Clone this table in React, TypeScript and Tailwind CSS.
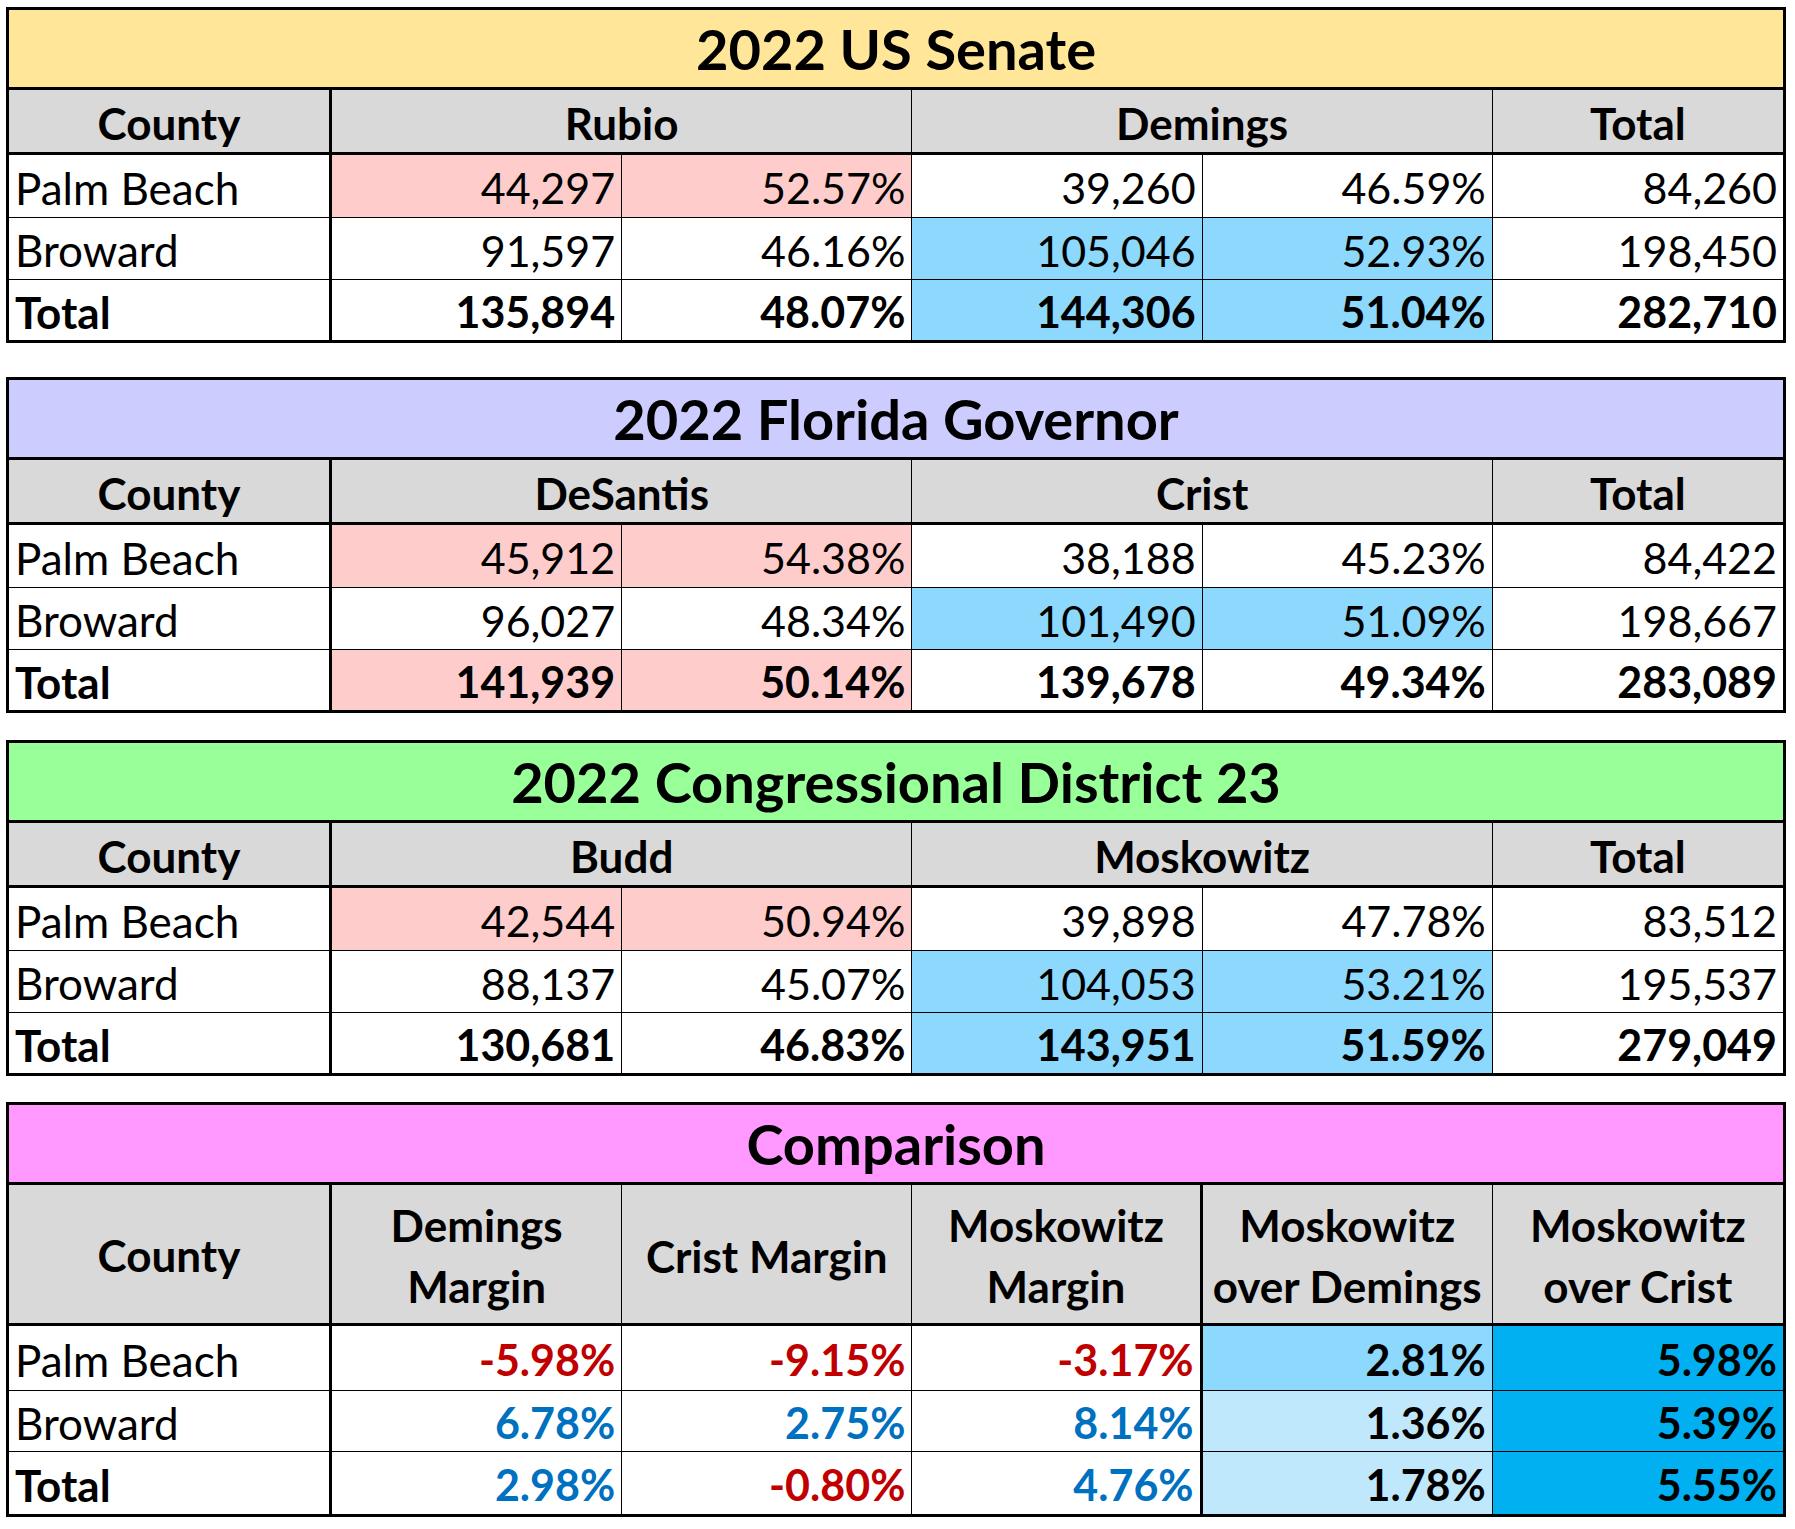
import React from 'react'

type Cell = { v: string; bg?: string; color?: string; bold?: boolean }
type Row = { county: string; total?: boolean; cells: Cell[] }

const PINK = 'bg-[#ffcccc]'
const BLUE = 'bg-[#8dd8fd]'
const LIGHT = 'bg-[#c0e8fc]'
const DEEP = 'bg-[#00b0f0]'
const RED = 'text-[#c00000]'
const BLU = 'text-[#0070c0]'

const rowHeights = ['h-[63px] border-b border-black', 'h-[62px] border-b border-black', 'h-[60px]']
const cmpHeights = ['h-[65px] border-b border-black', 'h-[61px] border-b border-black', 'h-[62px]']

function DataRow({ row, height, thick }: { row: Row; height: string; thick: number[] }) {
  return (
    <div className={`grid grid-cols-[323px_repeat(5,minmax(0,1fr))] ${height}`}>
      <div
        className={`flex items-center pt-[4px] px-[6px] border-r-[3px] border-black text-[44px] ${row.total ? 'font-bold' : ''}`}
      >
        {row.county}
      </div>
      {row.cells.map((c, i) => (
        <div
          key={i}
          className={`flex items-center justify-end pt-[4px] px-[6px] text-[43px] border-black ${
            i === 4 ? '' : thick.includes(i) ? 'border-r-[3px]' : 'border-r'
          } ${c.bg ?? 'bg-white'} ${c.color ?? 'text-black'} ${c.bold || row.total ? 'font-bold' : ''}`}
        >
          {c.v}
        </div>
      ))}
    </div>
  )
}

function Title({ text, bg }: { text: string; bg: string }) {
  return (
    <div className={`h-[80px] flex items-center justify-center border-b-[3px] border-black ${bg}`}>
      <span className="text-[56px] font-bold">{text}</span>
    </div>
  )
}

function RaceTable({
  title,
  titleBg,
  names,
  rows,
  className,
}: {
  title: string
  titleBg: string
  names: [string, string]
  rows: Row[]
  className?: string
}) {
  return (
    <div className={`w-[1780px] border-[3px] border-black bg-white ${className ?? ''}`}>
      <Title text={title} bg={titleBg} />
      <div className="grid grid-cols-[323px_repeat(5,minmax(0,1fr))] h-[65px] border-b-[3px] border-black bg-[#d9d9d9] text-[44px] font-bold">
        <div className="flex items-center justify-center pt-[4px] border-r-[3px] border-black">County</div>
        <div className="col-span-2 flex items-center justify-center pt-[4px] border-r border-black">{names[0]}</div>
        <div className="col-span-2 flex items-center justify-center pt-[4px] border-r border-black">{names[1]}</div>
        <div className="flex items-center justify-center pt-[4px]">Total</div>
      </div>
      {rows.map((r, i) => (
        <DataRow key={r.county} row={r} height={rowHeights[i]} thick={[]} />
      ))}
    </div>
  )
}

const senate: Row[] = [
  {
    county: 'Palm Beach',
    cells: [{ v: '44,297', bg: PINK }, { v: '52.57%', bg: PINK }, { v: '39,260' }, { v: '46.59%' }, { v: '84,260' }],
  },
  {
    county: 'Broward',
    cells: [{ v: '91,597' }, { v: '46.16%' }, { v: '105,046', bg: BLUE }, { v: '52.93%', bg: BLUE }, { v: '198,450' }],
  },
  {
    county: 'Total',
    total: true,
    cells: [{ v: '135,894' }, { v: '48.07%' }, { v: '144,306', bg: BLUE }, { v: '51.04%', bg: BLUE }, { v: '282,710' }],
  },
]

const governor: Row[] = [
  {
    county: 'Palm Beach',
    cells: [{ v: '45,912', bg: PINK }, { v: '54.38%', bg: PINK }, { v: '38,188' }, { v: '45.23%' }, { v: '84,422' }],
  },
  {
    county: 'Broward',
    cells: [{ v: '96,027' }, { v: '48.34%' }, { v: '101,490', bg: BLUE }, { v: '51.09%', bg: BLUE }, { v: '198,667' }],
  },
  {
    county: 'Total',
    total: true,
    cells: [{ v: '141,939', bg: PINK }, { v: '50.14%', bg: PINK }, { v: '139,678' }, { v: '49.34%' }, { v: '283,089' }],
  },
]

const district: Row[] = [
  {
    county: 'Palm Beach',
    cells: [{ v: '42,544', bg: PINK }, { v: '50.94%', bg: PINK }, { v: '39,898' }, { v: '47.78%' }, { v: '83,512' }],
  },
  {
    county: 'Broward',
    cells: [{ v: '88,137' }, { v: '45.07%' }, { v: '104,053', bg: BLUE }, { v: '53.21%', bg: BLUE }, { v: '195,537' }],
  },
  {
    county: 'Total',
    total: true,
    cells: [{ v: '130,681' }, { v: '46.83%' }, { v: '143,951', bg: BLUE }, { v: '51.59%', bg: BLUE }, { v: '279,049' }],
  },
]

const comparison: Row[] = [
  {
    county: 'Palm Beach',
    cells: [
      { v: '-5.98%', color: RED, bold: true },
      { v: '-9.15%', color: RED, bold: true },
      { v: '-3.17%', color: RED, bold: true },
      { v: '2.81%', bg: BLUE, bold: true },
      { v: '5.98%', bg: DEEP, bold: true },
    ],
  },
  {
    county: 'Broward',
    cells: [
      { v: '6.78%', color: BLU, bold: true },
      { v: '2.75%', color: BLU, bold: true },
      { v: '8.14%', color: BLU, bold: true },
      { v: '1.36%', bg: LIGHT, bold: true },
      { v: '5.39%', bg: DEEP, bold: true },
    ],
  },
  {
    county: 'Total',
    total: true,
    cells: [
      { v: '2.98%', color: BLU },
      { v: '-0.80%', color: RED },
      { v: '4.76%', color: BLU },
      { v: '1.78%', bg: LIGHT },
      { v: '5.55%', bg: DEEP },
    ],
  },
]

function ComparisonTable({ className }: { className?: string }) {
  const heads = ['Demings\nMargin', 'Crist Margin', 'Moskowitz\nMargin', 'Moskowitz\nover Demings', 'Moskowitz\nover Crist']
  return (
    <div className={`w-[1780px] border-[3px] border-black bg-white ${className ?? ''}`}>
      <Title text="Comparison" bg="bg-[#ff99ff]" />
      <div className="grid grid-cols-[323px_repeat(5,minmax(0,1fr))] h-[141px] border-b-[3px] border-black bg-[#d9d9d9] text-[44px] font-bold">
        <div className="flex items-center justify-center pt-[2px] border-r-[3px] border-black">County</div>
        {heads.map((h, i) => (
          <div
            key={h}
            className={`flex items-center justify-center pt-[4px] text-center whitespace-pre-line leading-[61px] border-black ${
              i === 4 ? '' : i === 2 ? 'border-r-[3px]' : 'border-r'
            }`}
          >
            {h}
          </div>
        ))}
      </div>
      {comparison.map((r, i) => (
        <DataRow key={r.county} row={r} height={cmpHeights[i]} thick={[2]} />
      ))}
    </div>
  )
}

export default function App() {
  return (
    <div className="min-h-screen bg-white pt-[7px] pl-[6px] text-black leading-[1.2] font-['Lato','Open_Sans',sans-serif]">
      <RaceTable title="2022 US Senate" titleBg="bg-[#ffe699]" names={['Rubio', 'Demings']} rows={senate} />
      <RaceTable
        className="mt-[34px]"
        title="2022 Florida Governor"
        titleBg="bg-[#ccccff]"
        names={['DeSantis', 'Crist']}
        rows={governor}
      />
      <RaceTable
        className="mt-[27px]"
        title="2022 Congressional District 23"
        titleBg="bg-[#99ff99]"
        names={['Budd', 'Moskowitz']}
        rows={district}
      />
      <ComparisonTable className="mt-[26px]" />
    </div>
  )
}
